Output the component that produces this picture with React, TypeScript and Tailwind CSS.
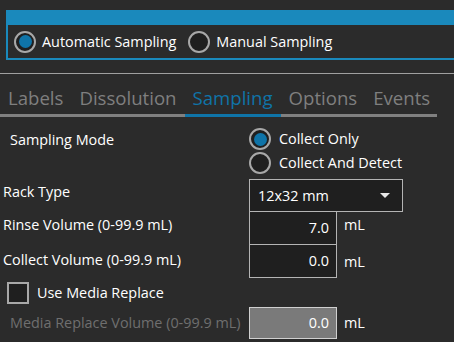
import React from "react";

const Radio = ({ checked }: { checked?: boolean }) => (
  <span className="flex h-[22px] w-[22px] shrink-0 items-center justify-center rounded-full border-2 border-[#a8a8a8] bg-[#1f1f1f]">
    {checked && <span className="h-[13px] w-[13px] rounded-full bg-[#0f74a8]" />}
  </span>
);

const tabs = ["Labels", "Dissolution", "Sampling", "Options", "Events"];

export default function App() {
  return (
    <div
      className="h-[342px] w-[454px] overflow-hidden bg-[#2b2b2b] text-[14.4px] text-white"
      style={{ fontFamily: '"Open Sans", "Noto Sans", sans-serif' }}
    >
      {/* top group */}
      <div className="pl-[6px] pt-[10px]">
        <div className="h-[15px] bg-[#1a89bc]" />
        <div className="flex h-[35px] items-center gap-[6px] border-b-2 border-l-2 border-[#1a89bc] pl-[6px]">
          <Radio checked />
          <span className="mr-[6px]">Automatic Sampling</span>
          <Radio />
          <span>Manual Sampling</span>
        </div>
      </div>
      <div className="mt-[13px] h-px bg-[#a0a0a0]" />

      {/* tabs */}
      <div className="mt-[10px] flex w-[437px] border-b-[3px] border-[#808080] text-[18.6px] leading-[28px]">
        {tabs.map((t) => (
          <div
            key={t}
            className={
              t === "Sampling"
                ? "-mb-[3px] border-b-[3px] border-[#0f74a8] px-[8px] pb-[2px] text-[#0f74a8]"
                : "px-[8px] pb-[2px] text-[#7f7f7f]"
            }
          >
            {t}
          </div>
        ))}
      </div>

      {/* form */}
      <div className="mt-[10px] flex flex-col">
        <div className="flex">
          <div className="w-[249px] pl-[10px] pt-[2px]">Sampling Mode</div>
          <div className="flex flex-col gap-[2px] pt-[1px]">
            <div className="flex h-[22px] items-center gap-[8px]">
              <Radio checked />
              <span>Collect Only</span>
            </div>
            <div className="flex h-[22px] items-center gap-[8px]">
              <Radio />
              <span>Collect And Detect</span>
            </div>
          </div>
        </div>

        <div className="mt-[5px] flex">
          <div className="w-[249px] pl-[3px] pt-[2px]">Rack Type</div>
          <div className="flex h-[33px] w-[154px] items-center justify-between border border-[#b4b4b4] bg-[#1f1f1f] pl-[8px] pr-[12px]">
            <span>12x32 mm</span>
            <svg width="10" height="6" viewBox="0 0 10 6">
              <path d="M0 0 L10 0 L5 5 Z" fill="#e8e8e8" />
            </svg>
          </div>
        </div>

        <div className="flex">
          <div className="w-[249px] pl-[3px] pt-[2px]">Rinse Volume (0-99.9 mL)</div>
          <div className="-mt-px flex h-[34px] w-[88px] items-center justify-end border border-[#b4b4b4] bg-[#1f1f1f] pr-[7px]">
            7.0
          </div>
          <span className="ml-[7px] pt-[2px]">mL</span>
        </div>

        <div className="flex">
          <div className="w-[249px] pl-[3px] pt-[4px]">Collect Volume (0-99.9 mL)</div>
          <div className="-mt-px flex h-[34px] w-[88px] items-center justify-end border border-[#b4b4b4] bg-[#1f1f1f] pr-[7px]">
            0.0
          </div>
          <span className="ml-[7px] pt-[6px]">mL</span>
        </div>

        <div className="mt-[4px] flex items-center gap-[8px] pl-[7px]">
          <span className="h-[22px] w-[22px] border-2 border-[#a8a8a8] bg-[#1f1f1f]" />
          <span>Use Media Replace</span>
        </div>

        <div className="mt-[3px] flex items-center">
          <div className="w-[249px] whitespace-nowrap pl-[10px] text-[#6f6f6f]">
            Media Replace Volume (0-99.9 mL)
          </div>
          <div className="flex h-[32px] w-[88px] items-center justify-end border border-[#d0d0d0] bg-[#7a7a7a] pr-[7px]">
            0.0
          </div>
          <span className="ml-[7px]">mL</span>
        </div>
      </div>
    </div>
  );
}
